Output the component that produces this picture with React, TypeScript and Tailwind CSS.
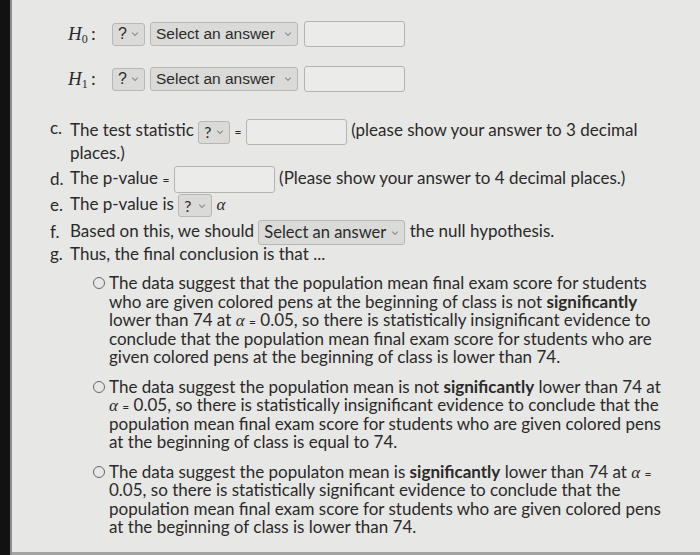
import React from 'react';

const body = { fontFamily: 'Lato, "Open Sans", sans-serif' };
const arial = { fontFamily: '"Liberation Sans", Arial, sans-serif' };
const serif = { fontFamily: '"Liberation Serif", serif' };

const Select = ({ label, className = '', sans = false }: { label: string; className?: string; sans?: boolean }) => (
  <span
    className={`inline-flex items-center justify-between whitespace-nowrap rounded-[3px] border border-[#b7b7b5] bg-[#dadad8] pl-[5px] pr-[5px] leading-none text-[#2b2b2b] align-middle ${className}`}
    style={sans ? arial : undefined}
  >
    <span>{label}</span>
    <svg width="8" height="6" viewBox="0 0 8 6" className="ml-[4px] shrink-0">
      <path d="M1.2 1.6 L4 4.4 L6.8 1.6" fill="none" stroke="#8c8c8c" strokeWidth="1.1" />
    </svg>
  </span>
);

const Input = ({ className = '' }: { className?: string }) => (
  <span className={`inline-block rounded-[3px] border border-[#b3b3b1] bg-[#ebebe9] align-middle ${className}`} />
);

const Hyp = ({ sub }: { sub: string }) => (
  <div className="flex items-center h-[26px]">
    <span className="w-[44px] text-[19px] text-[#2a2a2a]" style={serif}>
      <i>H</i>
      <sub className="text-[12px]">{sub}</sub>
      <span className="ml-[3px]">:</span>
    </span>
    <Select label="?" sans className="h-[23px] w-[33px] text-[16px]" />
    <Select label="Select an answer" sans className="ml-[5px] h-[24px] w-[148px] text-[15.5px]" />
    <Input className="ml-[6px] h-[26px] w-[101px]" />
  </div>
);

const Alpha = () => (
  <span className="italic leading-none" style={serif}>α</span>
);

const Eq = () => <span className="text-[12px] leading-none">=</span>;

const Option = ({ children }: { children: React.ReactNode }) => (
  <div className="flex">
    <span className="mt-[3px] mr-[4px] h-[12px] w-[12px] shrink-0 rounded-full border-[1.3px] border-[#666]" />
    <p className="w-[553px]">{children}</p>
  </div>
);

export default function App() {
  return (
    <div className="flex h-[555px] w-[700px] overflow-hidden text-[17px] leading-[18.5px] text-[#2a2a2a]" style={body}>
      <div className="w-[10px] shrink-0 bg-[#121212]" />
      <div className="w-[2px] shrink-0 bg-[#8f8f8d]" />
      <div className="flex-1 flex flex-col bg-[#e7e7e5]">
        <div className="flex flex-col gap-[19px] pl-[56px] pt-[21px]">
          <Hyp sub="0" />
          <Hyp sub="1" />
        </div>

        <div className="mt-[27px] pl-[38px] pr-[38px]">
          <div className="flex">
            <span className="w-[20px] shrink-0">c.</span>
            <div className="leading-[16px]">
              The test statistic <Select label="?" className="h-[23px] w-[32px] text-[16px]" /> <Eq />{' '}
              <Input className="h-[26px] w-[101px]" /> (please show your answer to 3 decimal places.)
            </div>
          </div>
          <div className="mt-[5px] flex h-[27px] items-center">
            <span className="w-[20px] shrink-0">d.</span>
            <div>
              The p-value <Eq /> <Input className="h-[27px] w-[101px]" /> (Please show your answer to 4 decimal places.)
            </div>
          </div>
          <div className="flex h-[25px] items-center">
            <span className="w-[20px] shrink-0">e.</span>
            <div>
              The p-value is <Select label="?" className="h-[23px] w-[34px] text-[16px]" /> <Alpha />
            </div>
          </div>
          <div className="mt-[2px] flex h-[25px] items-center">
            <span className="w-[20px] shrink-0">f.</span>
            <div>
              Based on this, we should <Select label="Select an answer" className="h-[25px] w-[147px] text-[16.5px]" />{' '}
              the null hypothesis.
            </div>
          </div>
          <div className="flex h-[18px] items-center">
            <span className="w-[20px] shrink-0">g.</span>
            <div>Thus, the final conclusion is that ...</div>
          </div>
        </div>

        <div className="mt-[11px] flex flex-col gap-[11px] pl-[81px]">
          <Option>
            The data suggest that the population mean final exam score for students who are given colored pens at the
            beginning of class is not <b>significantly</b> lower than 74 at <Alpha /> <Eq /> 0.05, so there is
            statistically insignificant evidence to conclude that the population mean final exam score for students
            who are given colored pens at the beginning of class is lower than 74.
          </Option>
          <Option>
            The data suggest the population mean is not <b>significantly</b> lower than 74 at <Alpha /> <Eq /> 0.05, so
            there is statistically insignificant evidence to conclude that the population mean final exam score for
            students who are given colored pens at the beginning of class is equal to 74.
          </Option>
          <Option>
            The data suggest the populaton mean is <b>significantly</b> lower than 74 at <Alpha /> <Eq /> 0.05, so there
            is statistically significant evidence to conclude that the population mean final exam score for students
            who are given colored pens at the beginning of class is lower than 74.
          </Option>
        </div>

        <div className="mt-auto h-[3px] bg-[#a3a3a1]" />
      </div>
    </div>
  );
}
